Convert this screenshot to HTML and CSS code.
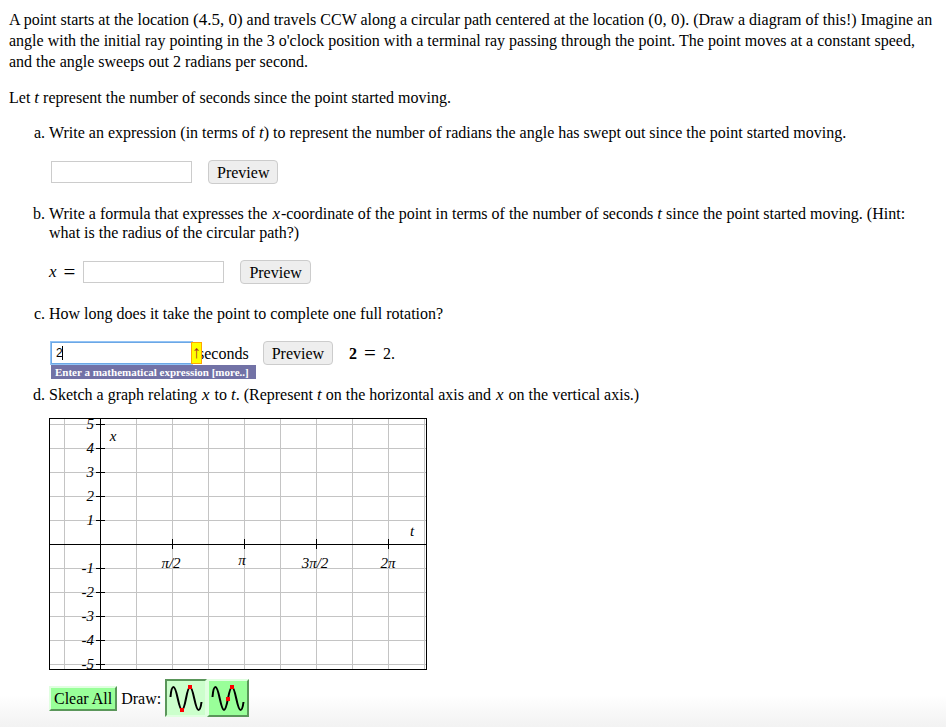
FILE: index.html
```
<!DOCTYPE html>
<html lang="en">

<head>
    <meta charset="utf-8">
    <title>Circular motion</title>
    <link rel="stylesheet" href="styles.css">
</head>

<body>
    <p class="intro">A point starts at the location <span class="num">(4.5, 0)</span> and travels CCW along a circular path centered at the location <span class="num">(0, 0)</span>. (Draw a diagram of this!) Imagine an angle with the initial ray pointing in the 3 o'clock position with a terminal ray passing through the point. The point moves at a constant speed, and the angle sweeps out 2 radians per second.</p>
    <p class="intro">Let <i class="var">t</i> represent the number of seconds since the point started moving.</p>
    <ol class="questions">
        <li>
            <label for="qa">Write an expression (in terms of <i class="var">t</i>) to represent the number of radians the angle has swept out since the point started moving.</label>
            <div class="answer">
                <input class="box first" id="qa" type="text">
                <button class="preview" type="button">Preview</button>
            </div>
        </li>
        <li>
            <label for="qb">Write a formula that expresses the <i class="var wide">x</i>-coordinate of the point in terms of the number of seconds <i class="var">t</i> since the point started moving. (Hint: what is the radius of the circular path?)</label>
            <div class="answer">
                <span class="eq"><i class="var">x</i><span class="sign">=</span></span>
                <input class="box" id="qb" type="text">
                <button class="preview" type="button">Preview</button>
            </div>
        </li>
        <li>
            <label for="qc">How long does it take the point to complete one full rotation?</label>
            <div class="answer">
                <div class="field first">
                    <input class="box focused" id="qc" type="text" value="2">
                    <span class="caret"></span>
                    <span class="arrow">↑</span>
                    <div class="tip">Enter a mathematical expression [more..]</div>
                </div>
                <span class="unit">seconds</span>
                <button class="preview near" type="button">Preview</button>
                <span class="result"><b>2</b><span class="sign">=</span><span>2.</span></span>
            </div>
        </li>
        <li>
            Sketch a graph relating <i class="var wide">x</i> to <i class="var">t</i>. (Represent <i class="var">t</i> on the horizontal axis and <i class="var wide">x</i> on the vertical axis.)
            <svg class="graph" width="378" height="252" viewBox="0 0 378 252" shape-rendering="crispEdges">
                <rect width="378" height="252" fill="#fff" />
                <path class="grid" d="M15.5 0V252M87.5 0V252M123.5 0V252M159.5 0V252M195.5 0V252M231.5 0V252M267.5 0V252M303.5 0V252M339.5 0V252M375.5 0V252" />
                <path class="grid" d="M0 6.5H378M0 30.5H378M0 54.5H378M0 78.5H378M0 102.5H378M0 150.5H378M0 174.5H378M0 198.5H378M0 222.5H378M0 246.5H378" />
                <!-- axes and ticks -->
                <path class="axis" d="M51.5 0V252M0 126.5H378" />
                <path class="axis" d="M47 6.5H56M47 30.5H56M47 54.5H56M47 78.5H56M47 102.5H56M47 150.5H56M47 174.5H56M47 198.5H56M47 222.5H56M47 246.5H56" />
                <path class="axis" d="M123.5 121V131M195.5 121V131M267.5 121V131M339.5 121V131" />
                <g class="ticks" text-anchor="end">
                    <text x="45" y="11">5</text>
                    <text x="45" y="35">4</text>
                    <text x="45" y="59">3</text>
                    <text x="45" y="83">2</text>
                    <text x="45" y="107">1</text>
                    <text x="45" y="155">-1</text>
                    <text x="45" y="179">-2</text>
                    <text x="45" y="203">-3</text>
                    <text x="45" y="227">-4</text>
                    <text x="45" y="251">-5</text>
                </g>
                <g class="ticks" text-anchor="middle">
                    <text x="122" y="150">π/2</text>
                    <text x="193" y="147">π</text>
                    <text x="266" y="150">3π/2</text>
                    <text x="339" y="150">2π</text>
                    <text x="64" y="23">x</text>
                    <text x="363" y="118">t</text>
                </g>
                <rect class="axis" x="0.5" y="0.5" width="377" height="251" />
            </svg>
            <div class="tools">
                <button class="clear" type="button">Clear All</button>
                <span>Draw:</span>
                <div class="modes">
                    <button class="mode on" type="button" aria-label="Draw by peak and trough">
                        <svg width="36" height="32" viewBox="0 0 36 32">
                            <path class="wave" d="M2.500 15C3 9 4 5 5.500 5C9 5 10.500 28 14 28C17.500 28 18.500 5 22 5C25.500 5 27 28 30.500 28C32.500 28 33 24 33.500 20" />
                            <path fill="#f00" d="M12 26h4v4h-4zM20 3h4v4h-4z" />
                        </svg>
                    </button>
                    <button class="mode" type="button" aria-label="Draw by midline and peak">
                        <svg width="36" height="32" viewBox="0 0 36 32">
                            <path class="wave" d="M2.500 15C3 9 4 5 5.500 5C9 5 10.500 28 14 28C17.500 28 18.500 5 22 5C25.500 5 27 28 30.500 28C32.500 28 33 24 33.500 20" />
                            <path fill="#f00" d="M16 15h4v4h-4zM20 3h4v4h-4z" />
                        </svg>
                    </button>
                </div>
            </div>
        </li>
    </ol>
</body>

</html>
```
FILE: styles.css
```
* {
    box-sizing: border-box;
}

html {
    min-height: 100%;
    background: linear-gradient(to top, #f2f2f2, #fff 32px) no-repeat;
}

body {
    margin: 0;
    padding: 9px 8px 9px 9px;
    font-family: "Liberation Serif", "Times New Roman", serif;
    font-size: 16px;
    line-height: 21px;
    color: #000;
}

.intro {
    margin: 0 0 15px;
}

.num {
    font-size: 17px;
    line-height: 16px;
}

.var {
    font-size: 17px;
    line-height: 16px;
}

.wide {
    margin: 0 1px;
}

.questions {
    margin: 0;
    padding-left: 40px;
    line-height: 19px;
    list-style: lower-alpha;
}

.answer {
    display: flex;
    align-items: center;
    height: 24px;
    margin: 18px 0 20px;
}

.box {
    width: 141px;
    height: 22px;
    padding: 1px 4px;
    border: 1px solid #ccc;
    background: #fff;
    font-family: "Liberation Sans", Arial, sans-serif;
    font-size: 12px;
    outline: none;
}

.first {
    margin-left: 2px;
}

.preview {
    height: 24px;
    margin-left: 16px;
    padding: 0 8px;
    border: 1px solid #ccc;
    border-radius: 4px;
    background: #eee;
    font: inherit;
    color: #000;
}

.near {
    margin-left: 14px;
}

.eq,
.result {
    display: flex;
    align-items: center;
    gap: 7px;
}

.eq {
    margin-right: 8px;
}

.sign {
    font-size: 21px;
    line-height: 16px;
}

.field {
    position: relative;
    display: flex;
}

.focused {
    border-color: #6ba7e5;
    box-shadow: 0 0 0 1px #93c3f5;
}

.caret {
    position: absolute;
    left: 11px;
    top: 4px;
    width: 1px;
    height: 14px;
    background: #000;
}

.arrow {
    position: absolute;
    left: 140px;
    top: 0;
    display: flex;
    justify-content: center;
    width: 11px;
    height: 22px;
    border: 1px solid #ffa500;
    background: #ff0;
    color: #a52a2a;
    font-size: 18px;
    font-weight: bold;
}

.tip {
    position: absolute;
    left: 0;
    top: 23px;
    padding: 0 7px 0 4px;
    background: #7272a6;
    color: #fff;
    font-size: 11px;
    font-weight: bold;
    line-height: 14px;
    white-space: nowrap;
}

.unit {
    margin-left: 6px;
}

.result {
    margin-left: 16px;
}

.graph {
    display: block;
    margin-top: 14px;
}

.grid {
    fill: none;
    stroke: #c4c4c4;
}

.axis {
    fill: none;
    stroke: #000;
}

.ticks {
    font-size: 15px;
    font-style: italic;
}

.tools {
    display: flex;
    align-items: center;
    gap: 4px;
    margin-top: 9px;
}

.clear,
.mode {
    border: 2px solid;
    border-color: #e0ffe0 #5a965a #5a965a #e0ffe0;
    background: #9f9;
    font: inherit;
    color: #000;
}

.clear {
    height: 25px;
    padding: 0 3px;
}

.modes {
    display: flex;
}

.mode {
    padding: 1px;
}

.mode svg {
    display: block;
}

.on {
    border-color: #5a965a #e0ffe0 #e0ffe0 #5a965a;
    background: #cfc;
}

.wave {
    fill: none;
    stroke: #000;
    stroke-width: 2;
    shape-rendering: geometricPrecision;
}
```
